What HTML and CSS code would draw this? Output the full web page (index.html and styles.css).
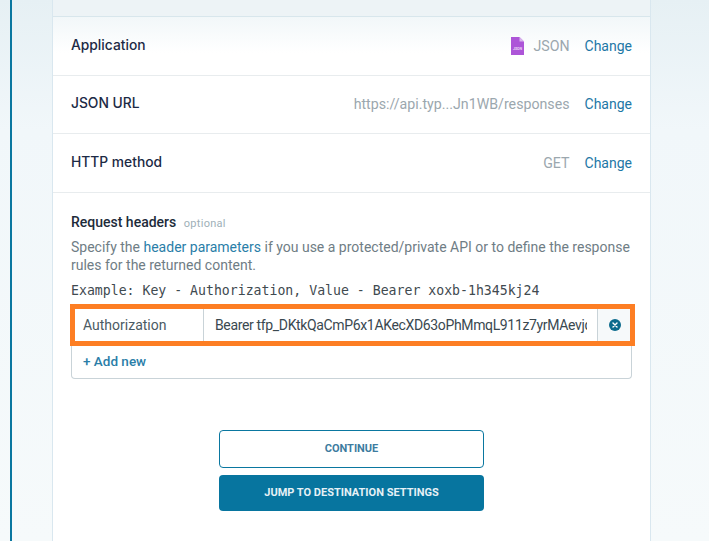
FILE: index.html
```html
<!DOCTYPE html>
<html lang="en">
<head>
<meta charset="utf-8">
<title>Request headers</title>
<link rel="stylesheet" href="styles.css">
</head>
<body>
<div class="rail">
  <main class="panel">
    <div class="top-strip"></div>
    <div class="row first">
      <span class="row-label">Application</span>
      <svg class="file-icon" width="13" height="18" viewBox="0 0 13 18"><path d="M0 0H8.5L13 4.5V18H0Z" fill="#ad55d8"/><path d="M8.5 0L13 4.5H8.5Z" fill="#d9b3ec"/><text x="6.5" y="12.6" text-anchor="middle" class="file-text">JSON</text></svg>
      <span class="row-value">JSON</span>
      <a class="change">Change</a>
    </div>
    <div class="row">
      <span class="row-label">JSON URL</span>
      <span class="row-value">https://api.typ...Jn1WB/responses</span>
      <a class="change">Change</a>
    </div>
    <div class="row">
      <span class="row-label">HTTP method</span>
      <span class="row-value">GET</span>
      <a class="change">Change</a>
    </div>
    <section class="headers">
      <h2 class="title">Request headers <span class="optional">optional</span></h2>
      <p class="desc">Specify the <span class="link">header parameters</span> if you use a protected/private API or to define the response rules for the returned content.</p>
      <p class="example">Example: Key - Authorization, Value - Bearer xoxb-1h345kj24</p>
      <div class="box">
        <div class="kv">
          <div class="key">Authorization</div>
          <div class="val"><span class="val-text">Bearer tfp_DKtkQaCmP6x1AKecXD63oPhMmqL911z7yrMAevjq</span></div>
          <div class="del">
            <svg width="12" height="12" viewBox="0 0 12 12"><circle cx="6" cy="6" r="6" fill="#0b6a8c"/><path d="M4 4L8 8M8 4L4 8" stroke="#fff" stroke-width="1.4" stroke-linecap="round"/></svg>
          </div>
        </div>
        <div class="add">+ Add new</div>
      </div>
    </section>
    <div class="actions">
      <button class="btn outline">CONTINUE</button>
      <button class="btn solid">JUMP TO DESTINATION SETTINGS</button>
    </div>
  </main>
</div>
</body>
</html>
```
FILE: styles.css
```css
html, body { margin: 0; height: 541px; overflow: hidden; }
body {
  background: linear-gradient(#e6f0f4 0, #f1f7fa 130px, #f6fafb 541px);
  font-family: Roboto, sans-serif;
}
.rail {
  margin-left: 10px;
  height: 541px;
  border-left: 2px solid #0a77a0;
  padding-left: 40px;
  box-sizing: border-box;
}
.panel {
  width: 599px;
  height: 541px;
  box-sizing: border-box;
  background: #fff;
  border-left: 1px solid #d9e7ef;
  border-right: 1px solid #d9e7ef;
}
.top-strip {
  height: 16px;
  background: #edf3f6;
  border-bottom: 1px solid #d8e6ec;
}
.row {
  height: 57.6px;
  border-bottom: 1px solid #e8ecee;
  display: flex;
  align-items: center;
  padding: 0 18px;
}
.row.first { background: linear-gradient(#f2f7f9, #fff 36px); }
.row-label {
  font-family: Inter, sans-serif;
  font-size: 13.8px;
  font-weight: 500;
  color: #1c2a45;
  margin-right: auto;
  position: relative;
  top: -1px;
}
.file-icon { margin-right: 9px; }
.file-text { font-family: Roboto, sans-serif; font-size: 3.6px; font-weight: 700; fill: #ead6f5; }
.row-value { color: #9ba7ae; font-size: 14.2px; }
.change { color: #1d77a6; font-size: 14px; margin-left: 15px; }
.headers { padding: 20px 18px 0 18px; }
.title {
  margin: 0;
  font-size: 14px;
  font-weight: 500;
  line-height: 18px;
  color: #1d2b3a;
}
.optional { font-size: 11px; font-weight: 400; color: #9eb0b8; margin-left: 4px; letter-spacing: .3px; }
.desc {
  margin: 5px 0 0;
  font-size: 14px;
  line-height: 18px;
  color: #6f7d85;
}
.link { color: #2a7ea8; }
.example {
  margin: 8px 0 0;
  font-family: "DejaVu Sans Mono", monospace;
  font-size: 13.2px;
  line-height: 18px;
  color: #3f4a50;
}
.box {
  margin-top: 4px;
  height: 75px;
  box-sizing: border-box;
  border: 1px solid #c9d3d8;
  border-top: 0;
  border-radius: 0 0 4px 4px;
}
.kv {
  display: flex;
  margin: 0 -4px 0 -2px;
  height: 42px;
  box-sizing: border-box;
  border: 5px solid #fd7e23;
  background: #fff;
  font-size: 14px;
  color: #4b5a63;
  align-items: stretch;
}
.key { width: 129px; padding-left: 8px; box-sizing: border-box; line-height: 32px; border-right: 1px solid #c9d3d8; }
.val { flex: 1; min-width: 0; padding: 0 10px 0 11px; line-height: 32px; color: #3a4850; border-right: 1px solid #c9d3d8; letter-spacing: -.35px; }
.val-text { display: block; overflow: hidden; white-space: nowrap; }
.del { width: 32px; padding-left: 1px; box-sizing: border-box; display: flex; align-items: center; justify-content: center; background: #f6f9fa; }
.add { padding: 6px 0 0 11px; font-size: 13.5px; font-weight: 500; color: #2a7ea8; line-height: 18px; }
.actions {
  margin-top: 51px;
  display: flex;
  flex-direction: column;
  align-items: center;
  gap: 7px;
}
.btn {
  width: 265px;
  border-radius: 4px;
  font-family: Roboto, sans-serif;
  font-size: 11px;
  font-weight: 700;
  box-sizing: border-box;
  padding: 0;
}
.outline { height: 38px; background: #fff; border: 1px solid #0a77a0; color: #3d7c9f; }
.solid { height: 36px; background: #07759f; border: 0; color: #e6f1f6; }
```
